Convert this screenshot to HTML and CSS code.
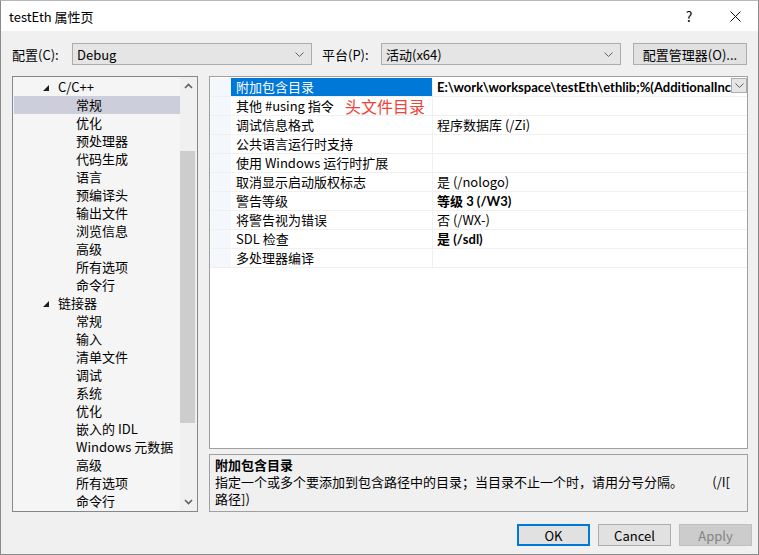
FILE: index.html
```html
<!DOCTYPE html>
<html lang="zh-CN">
<head>
  <meta charset="UTF-8">
  <title>testEth 属性页</title>
  <link rel="stylesheet" href="styles.css">
</head>
<body>
  <div class="window">
    <div class="titlebar">
      <span class="title">testEth 属性页</span>
      <span class="cap-btn">?</span>
      <span class="cap-btn close">
        <svg width="11" height="11" viewBox="0 0 11 11"><path d="M0.5 0.5 L10.5 10.5 M10.5 0.5 L0.5 10.5" stroke="#111" stroke-width="1"/></svg>
      </span>
    </div>

    <div class="config-row">
      <span class="label">配置(C):</span>
      <div class="combo">
        <span>Debug</span>
        <svg class="chev" width="9" height="5" viewBox="0 0 9 5"><path d="M0.5 0.5 L4.5 4.5 L8.5 0.5" fill="none" stroke="#606060"/></svg>
      </div>
      <span class="label platform">平台(P):</span>
      <div class="combo">
        <span>活动(x64)</span>
        <svg class="chev" width="9" height="5" viewBox="0 0 9 5"><path d="M0.5 0.5 L4.5 4.5 L8.5 0.5" fill="none" stroke="#606060"/></svg>
      </div>
      <button class="btn manager">配置管理器(O)...</button>
    </div>

    <div class="main">
      <div class="tree">
        <ul class="tree-list">
          <li class="group"><span class="tri"></span>C/C++</li>
          <li class="selected">常规</li>
          <li>优化</li>
          <li>预处理器</li>
          <li>代码生成</li>
          <li>语言</li>
          <li>预编译头</li>
          <li>输出文件</li>
          <li>浏览信息</li>
          <li>高级</li>
          <li>所有选项</li>
          <li>命令行</li>
          <li class="group"><span class="tri"></span>链接器</li>
          <li>常规</li>
          <li>输入</li>
          <li>清单文件</li>
          <li>调试</li>
          <li>系统</li>
          <li>优化</li>
          <li>嵌入的 IDL</li>
          <li>Windows 元数据</li>
          <li>高级</li>
          <li>所有选项</li>
          <li>命令行</li>
        </ul>
        <div class="scrollbar">
          <svg class="arrow" width="9" height="6" viewBox="0 0 9 6"><path d="M1 5 L4.5 1.5 L8 5" fill="none" stroke="#606060" stroke-width="1.6"/></svg>
          <div class="track"><div class="thumb"></div></div>
          <svg class="arrow" width="9" height="6" viewBox="0 0 9 6"><path d="M1 1 L4.5 4.5 L8 1" fill="none" stroke="#606060" stroke-width="1.6"/></svg>
        </div>
      </div>

      <div class="right">
        <div class="grid">
          <div class="row">
            <div class="gutter"></div>
            <div class="name active">附加包含目录</div>
            <div class="value bold">
              <span class="clip">E:\work\workspace\testEth\ethlib;%(AdditionalIncludeDirectories)</span>
              <span class="drop">
                <svg width="9" height="5" viewBox="0 0 9 5"><path d="M0.5 0.5 L4.5 4.5 L8.5 0.5" fill="none" stroke="#606060"/></svg>
              </span>
            </div>
          </div>
          <div class="row"><div class="gutter"></div><div class="name">其他 #using 指令</div><div class="value"></div></div>
          <div class="row"><div class="gutter"></div><div class="name">调试信息格式</div><div class="value">程序数据库 (/Zi)</div></div>
          <div class="row"><div class="gutter"></div><div class="name">公共语言运行时支持</div><div class="value"></div></div>
          <div class="row"><div class="gutter"></div><div class="name">使用 Windows 运行时扩展</div><div class="value"></div></div>
          <div class="row"><div class="gutter"></div><div class="name">取消显示启动版权标志</div><div class="value">是 (/nologo)</div></div>
          <div class="row"><div class="gutter"></div><div class="name">警告等级</div><div class="value bold">等级 3 (/W3)</div></div>
          <div class="row"><div class="gutter"></div><div class="name">将警告视为错误</div><div class="value">否 (/WX-)</div></div>
          <div class="row"><div class="gutter"></div><div class="name">SDL 检查</div><div class="value bold">是 (/sdl)</div></div>
          <div class="row"><div class="gutter"></div><div class="name">多处理器编译</div><div class="value"></div></div>
          <span class="note">头文件目录</span>
        </div>

        <div class="desc">
          <div class="desc-title">附加包含目录</div>
          <div class="desc-line">
            <span>指定一个或多个要添加到包含路径中的目录；当目录不止一个时，请用分号分隔。</span>
            <span class="switch">(/I[</span>
          </div>
          <div>路径])</div>
        </div>
      </div>
    </div>

    <div class="footer">
      <button class="btn ok">OK</button>
      <button class="btn">Cancel</button>
      <button class="btn" disabled>Apply</button>
    </div>
  </div>
</body>
</html>
```

FILE: styles.css
```css
body {
  margin: 0;
  font-family: "Noto Sans CJK SC", sans-serif;
  font-size: 13px;
  color: #000;
}
.window {
  width: 759px;
  height: 555px;
  box-sizing: border-box;
  border: 1px solid #8a8a8a;
  border-top-color: #b8b8b8;
  background: #f0f0f0;
  display: flex;
  flex-direction: column;
}
.titlebar {
  height: 30px;
  background: #fff;
  display: flex;
  align-items: center;
}
.title {
  flex: 1;
  padding-left: 8px;
  font-size: 13px;
}
.cap-btn {
  width: 46px;
  height: 30px;
  display: flex;
  align-items: center;
  justify-content: center;
  font-size: 14px;
}
.config-row {
  display: flex;
  align-items: center;
  height: 22px;
  margin-top: 12px;
  padding-left: 11px;
}
.label {
  width: 60px;
}
.label.platform {
  width: 59px;
  padding-left: 10px;
}
.combo {
  width: 240px;
  height: 22px;
  box-sizing: border-box;
  border: 1px solid #adadad;
  background: #e5e5e5;
  display: flex;
  align-items: center;
  padding: 0 7px 0 4px;
}
.combo span {
  flex: 1;
}
.btn {
  font-family: "Noto Sans CJK SC", sans-serif;
  font-size: 13px;
  height: 22px;
  box-sizing: border-box;
  border: 1px solid #adadad;
  background: #e1e1e1;
  color: #000;
  padding: 0;
}
.btn.manager {
  width: 114px;
  margin-left: 12px;
}
.main {
  display: flex;
  margin-top: 11px;
  padding-left: 11px;
  height: 436px;
}
.tree {
  width: 186px;
  box-sizing: border-box;
  border: 1px solid #828790;
  background: #f5f5f5;
  display: flex;
}
.tree-list {
  list-style: none;
  margin: 0;
  padding: 1px 0 0 1px;
  flex: 1;
}
.tree-list li {
  height: 18px;
  line-height: 18px;
  padding-left: 62px;
}
.tree-list li.group {
  padding-left: 29px;
  display: flex;
  align-items: center;
}
.tree-list li.selected {
  background: #cccedb;
}
.tri {
  width: 0;
  height: 0;
  border-left: 6px solid transparent;
  border-bottom: 6px solid #1e1e1e;
  margin-right: 9px;
  margin-top: 1px;
}
.scrollbar {
  width: 17px;
  display: flex;
  flex-direction: column;
  align-items: center;
  background: #f0f0f0;
}
.arrow {
  margin: 6px 0;
}
.track {
  flex: 1;
  width: 100%;
  padding: 56px 1px 70px 0;
  box-sizing: border-box;
}
.thumb {
  width: 15px;
  height: 100%;
  background: #cdcdcd;
}
.right {
  width: 539px;
  margin-left: 11px;
  display: flex;
  flex-direction: column;
}
.grid {
  position: relative;
  height: 373px;
  box-sizing: border-box;
  border: 1px solid #a0a0a0;
  background: #fff;
  padding-top: 1px;
}
.row {
  display: flex;
  height: 19px;
  box-sizing: border-box;
  border-bottom: 1px solid #f0f0f0;
}
.gutter {
  width: 21px;
  background: #f4f7fc;
}
.name {
  width: 202px;
  padding-left: 5px;
  box-sizing: border-box;
  line-height: 18px;
  border-right: 1px solid #f0f0f0;
  white-space: nowrap;
}
.name.active {
  background: #0078d7;
  color: #fff;
}
.value {
  flex: 1;
  min-width: 0;
  padding-left: 4px;
  line-height: 18px;
  display: flex;
  white-space: nowrap;
}
.value.bold {
  font-family: "Lato", "Noto Sans CJK SC", sans-serif;
  font-weight: bold;
}
.clip {
  flex: 1;
  overflow: hidden;
}
.drop {
  width: 16px;
  height: 15px;
  box-sizing: border-box;
  border: 1px solid #adadad;
  background: #e5e5e5;
  display: flex;
  align-items: center;
  justify-content: center;
}
.note {
  position: absolute;
  left: 135px;
  top: 18px;
  color: #f0443a;
  font-size: 16px;
  line-height: 22px;
}
.desc {
  margin-top: 5px;
  height: 58px;
  box-sizing: border-box;
  border: 1px solid #a0a0a0;
  padding: 1px 5px 0;
  line-height: 17px;
}
.desc-title {
  font-weight: bold;
}
.desc-line {
  display: flex;
  justify-content: space-between;
  padding-right: 12px;
}
.footer {
  display: flex;
  justify-content: flex-end;
  gap: 8px;
  margin-top: 12px;
  padding-right: 6px;
}
.footer .btn {
  width: 73px;
}
.btn.ok {
  border: 2px solid #0078d7;
}
.btn:disabled {
  background: #cccccc;
  border-color: #bfbfbf;
  color: #838383;
}
```
